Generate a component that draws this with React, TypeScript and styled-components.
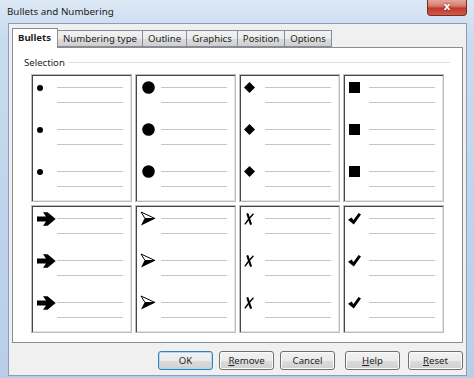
import React from "react";
import styled, { createGlobalStyle } from "styled-components";

const GlobalStyle = createGlobalStyle`
  html, body {
    margin: 0;
    padding: 0;
    background: #ffffff;
  }
  body {
    font-family: "Noto Sans", "Open Sans", sans-serif;
    color: #1e1e1e;
  }
`;

type BulletKind = "dot" | "bigdot" | "diamond" | "square" | "arrow" | "arrowhead" | "cross" | "check";

const Bullet = ({ kind }: { kind: BulletKind }) => {
	switch (kind) {
		case "dot":
			return (
				<svg width="6" height="6" viewBox="0 0 6 6">
					<circle cx="3" cy="3" r="3" fill="#000" />
				</svg>
			);
		case "bigdot":
			return (
				<svg width="13" height="13" viewBox="0 0 13 13">
					<circle cx="6.5" cy="6.5" r="6.3" fill="#000" />
				</svg>
			);
		case "diamond":
			return (
				<svg width="11" height="11" viewBox="0 0 11 11">
					<path d="M5.5 0 L11 5.5 L5.5 11 L0 5.5 Z" fill="#000" />
				</svg>
			);
		case "square":
			return (
				<svg width="11" height="11" viewBox="0 0 11 11">
					<rect x="0" y="0" width="11" height="11" fill="#000" />
				</svg>
			);
		case "arrow":
			return (
				<svg width="19" height="14" viewBox="0 0 19 14">
					<path d="M0 4.6 H9 L6 0.3 H10.6 L18.7 7 L10.6 13.7 H6 L9 9.4 H0 Z" fill="#000" />
				</svg>
			);
		case "arrowhead":
			return (
				<svg width="16" height="15" viewBox="0 0 16 15">
					<path d="M1 1 L15 7.5 L5 7.5 Z" fill="#fff" stroke="#000" strokeWidth="1" strokeLinejoin="round" />
					<path d="M4.5 7.5 L15.5 7.5 L1 14.5 Z" fill="#000" />
				</svg>
			);
		case "cross":
			return (
				<svg width="10" height="12" viewBox="0 0 10 12">
					<path d="M3.6 1.2 C4.6 4.5 5.6 7.5 6.8 10.8" stroke="#000" strokeWidth="2.2" fill="none" strokeLinecap="round" />
					<path d="M9 1.2 C6.5 3.8 3.8 7 1.2 10.8" stroke="#000" strokeWidth="1.5" fill="none" strokeLinecap="round" />
				</svg>
			);
		case "check":
			return (
				<svg width="13" height="12" viewBox="0 0 13 12">
					<path d="M0 6.8 L3.8 4.6 L5.3 7.3 L10.6 0 L13 1.5 L5.8 11.6 Z" fill="#000" />
				</svg>
			);
	}
};

type Style = { kind: BulletKind; indent: number };

const styles: Style[] = [
	{ kind: "dot", indent: 5 },
	{ kind: "bigdot", indent: 6 },
	{ kind: "diamond", indent: 4 },
	{ kind: "square", indent: 5 },
	{ kind: "arrow", indent: 5 },
	{ kind: "arrowhead", indent: 4 },
	{ kind: "cross", indent: 4 },
	{ kind: "check", indent: 4 },
];

const tabs = ["Bullets", "Numbering type", "Outline", "Graphics", "Position", "Options"];

const App = () => {
	return (
		<>
			<GlobalStyle />
			<Window>
				<TitleBar>
					<Title>Bullets and Numbering</Title>
					<CloseButton>x</CloseButton>
				</TitleBar>
				<Client>
					<TabStrip>
						{tabs.map((t, i) => (
							<Tab key={t} $active={i === 0}>
								{t}
							</Tab>
						))}
					</TabStrip>
					<Panel>
						<SectionHeader>
							<span>Selection</span>
							<Rule />
						</SectionHeader>
						<Grid>
							{styles.map((s) => (
								<Cell key={s.kind}>
									{[0, 1, 2].map((n) => (
										<Entry key={n}>
											<BulletSlot $indent={s.indent}>
												<Bullet kind={s.kind} />
											</BulletSlot>
											<Lines>
												<Line />
												<Line />
											</Lines>
										</Entry>
									))}
								</Cell>
							))}
						</Grid>
					</Panel>
					<ButtonRow>
						<Button $default>OK</Button>
						<Button>
							<u>R</u>emove
						</Button>
						<Button>Cancel</Button>
						<Button $gapBefore={4}>
							<u>H</u>elp
						</Button>
						<Button $gapBefore={2}>
							<u>R</u>eset
						</Button>
					</ButtonRow>
				</Client>
			</Window>
		</>
	);
};

// styles
const Window = styled.div`
	width: 474px;
	height: 378px;
	box-sizing: border-box;
	display: flex;
	flex-direction: column;
	background: linear-gradient(180deg, #dce8f5 0%, #c9dbef 10%, #bed3eb 60%, #b9cfe8 100%);
	padding: 0 7px 2px 8px;
`;

const TitleBar = styled.div`
	height: 23px;
	display: flex;
	align-items: flex-start;
	margin-left: -1px;
`;

const Title = styled.div`
	font-size: 9.8px;
	line-height: 24px;
	color: #1a1a1a;
`;

const CloseButton = styled.div`
	margin-left: auto;
	width: 40px;
	height: 16px;
	box-sizing: border-box;
	border: 1px solid #7a2b24;
	border-top: none;
	border-radius: 0 0 4px 4px;
	background: linear-gradient(180deg, #e4a79b 0%, #d67a6c 40%, #c2392c 55%, #cf5a48 100%);
	color: #ffffff;
	font-family: "DejaVu Sans", sans-serif;
	font-weight: bold;
	font-size: 11px;
	line-height: 14px;
	text-align: center;
	text-shadow: 0 0 2px #5a1410;
`;

const Client = styled.div`
	flex: 1;
	display: flex;
	flex-direction: column;
	background: #f0f0f0;
	border: 1px solid #8a9eb8;
	padding: 4px 3px 0 3px;
`;

const TabStrip = styled.div`
	display: flex;
	align-items: flex-end;
	height: 19px;
	position: relative;
	z-index: 1;
`;

const Tab = styled.div<{ $active?: boolean }>`
	box-sizing: border-box;
	height: ${(p) => (p.$active ? "20px" : "17px")};
	margin-bottom: ${(p) => (p.$active ? "-1px" : "0")};
	padding: ${(p) => (p.$active ? "0 6px 0 5px" : "0 5px")};
	margin-left: ${(p) => (p.$active ? "0" : "-1px")};
	border: 1px solid #898c95;
	border-bottom: ${(p) => (p.$active ? "none" : "1px solid #898c95")};
	background: ${(p) => (p.$active ? "#ffffff" : "linear-gradient(180deg, #f2f2f2 0%, #ebebeb 50%, #dddddd 51%, #cfcfcf 100%)")};
	font-size: 9.6px;
	font-weight: ${(p) => (p.$active ? "bold" : "normal")};
	line-height: ${(p) => (p.$active ? "18px" : "15px")};
	color: #1e1e1e;
	white-space: nowrap;
	&:first-child {
		margin-left: 0;
	}
`;

const Panel = styled.div`
	height: 296px;
	box-sizing: border-box;
	background: #ffffff;
	border: 1px solid #898c95;
	padding: 7px 12px 0 11px;
`;

const SectionHeader = styled.div`
	display: flex;
	align-items: center;
	gap: 4px;
	height: 14px;
	font-size: 9.6px;
	color: #1e1e1e;
`;

const Rule = styled.div`
	flex: 1;
	height: 1px;
	background: #d5dfe5;
`;

const Grid = styled.div`
	display: grid;
	grid-template-columns: repeat(4, 101px);
	grid-auto-rows: 128px;
	gap: 3px;
	margin: 5px 0 0 7px;
`;

const Cell = styled.div`
	box-sizing: border-box;
	background: #ffffff;
	border: 1px solid #bdbdbd;
	box-shadow: inset 1px 1px 0 #454545, inset -1px -1px 0 #e2e2e2;
	display: flex;
	flex-direction: column;
`;

const Entry = styled.div`
	display: flex;
	height: 42px;
`;

const BulletSlot = styled.div<{ $indent: number }>`
	box-sizing: border-box;
	width: 25px;
	height: 25px;
	padding-left: ${(p) => p.$indent}px;
	display: flex;
	align-items: center;
	flex-shrink: 0;
`;

const Lines = styled.div`
	display: flex;
	flex-direction: column;
	gap: 14px;
	padding-top: 12px;
`;

const Line = styled.div`
	width: 66px;
	height: 1px;
	background: #c6c6c6;
`;

const ButtonRow = styled.div`
	display: flex;
	justify-content: flex-end;
	gap: 6px;
	padding-top: 8px;
`;

const Button = styled.button<{ $default?: boolean; $gapBefore?: number }>`
	width: 55px;
	height: 19px;
	box-sizing: border-box;
	padding: 0;
	margin-left: ${(p) => p.$gapBefore ?? 0}px;
	border: 1px solid ${(p) => (p.$default ? "#3c7fb1" : "#707070")};
	border-radius: 3px;
	background: linear-gradient(180deg, #f2f2f2 0%, #ebebeb 50%, #dddddd 51%, #cfcfcf 100%);
	box-shadow: inset 0 0 0 1px ${(p) => (p.$default ? "#a8dcf6" : "#fcfcfc")};
	font-family: "Noto Sans", "Open Sans", sans-serif;
	font-size: 9.6px;
	line-height: 16px;
	color: #1e1e1e;
	cursor: pointer;
	u {
		text-decoration: underline;
		text-underline-offset: 1px;
	}
`;

export default App;
